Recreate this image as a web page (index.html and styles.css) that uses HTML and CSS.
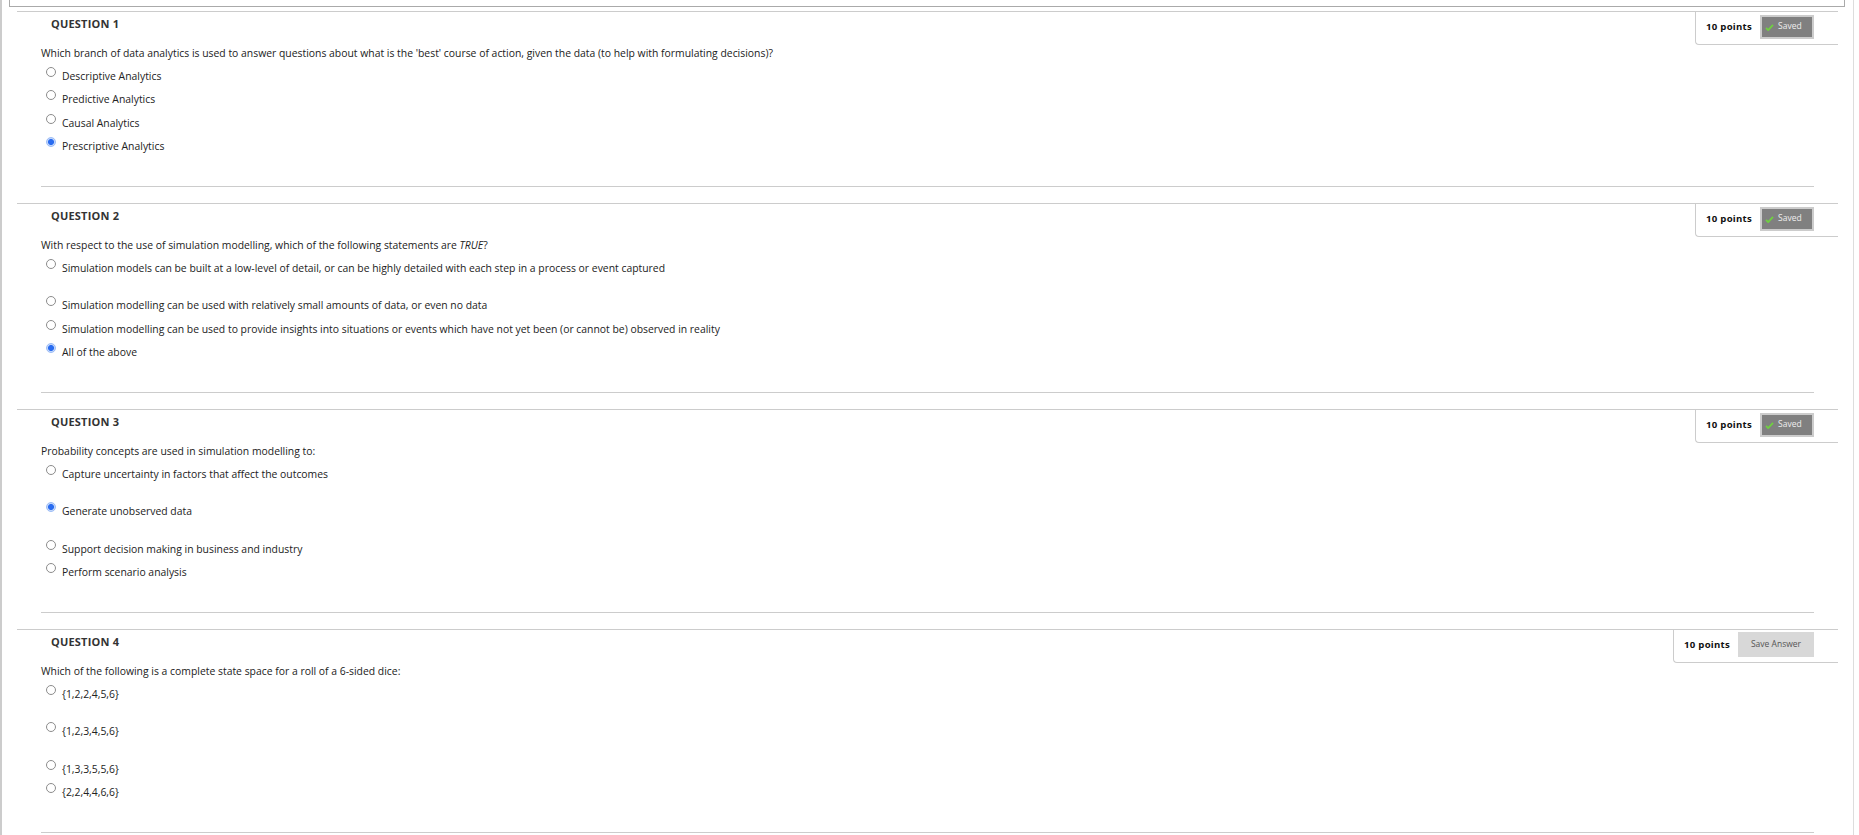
FILE: index.html
```html
<!DOCTYPE html>
<html lang="en">
<head>
<meta charset="utf-8">
<title>Test</title>
<link rel="stylesheet" href="styles.css">
</head>
<body>
<div class="page">
  <div class="topbox"></div>

  <section class="question q1">
    <header class="qhead">
      <h3 class="qtitle">QUESTION 1</h3>
      <div class="points"><span class="pts">10 points</span><span class="btn saved"><svg class="tick" viewBox="0 0 10 8"><path d="M1 4.5 L3.5 7 L9 1" fill="none" stroke="#6fd040" stroke-width="2"/></svg>Saved</span></div>
    </header>
    <div class="qbody">
      <p class="prompt">Which branch of data analytics is used to answer questions about what is the 'best' course of action, given the data (to help with formulating decisions)?</p>
      <label class="opt"><input type="radio" name="q1"><span>Descriptive Analytics</span></label>
      <label class="opt"><input type="radio" name="q1"><span>Predictive Analytics</span></label>
      <label class="opt"><input type="radio" name="q1"><span>Causal Analytics</span></label>
      <label class="opt"><input type="radio" name="q1" checked><span>Prescriptive Analytics</span></label>
    </div>
  </section>

  <section class="question q2">
    <header class="qhead">
      <h3 class="qtitle">QUESTION 2</h3>
      <div class="points"><span class="pts">10 points</span><span class="btn saved"><svg class="tick" viewBox="0 0 10 8"><path d="M1 4.5 L3.5 7 L9 1" fill="none" stroke="#6fd040" stroke-width="2"/></svg>Saved</span></div>
    </header>
    <div class="qbody">
      <p class="prompt">With respect to the use of simulation modelling, which of the following statements are <em>TRUE</em>?</p>
      <label class="opt tall"><input type="radio" name="q2"><span>Simulation models can be built at a low-level of detail, or can be highly detailed with each step in a process or event captured</span></label>
      <label class="opt"><input type="radio" name="q2"><span>Simulation modelling can be used with relatively small amounts of data, or even no data</span></label>
      <label class="opt"><input type="radio" name="q2"><span>Simulation modelling can be used to provide insights into situations or events which have not yet been (or cannot be) observed in reality</span></label>
      <label class="opt"><input type="radio" name="q2" checked><span>All of the above</span></label>
    </div>
  </section>

  <section class="question q3">
    <header class="qhead">
      <h3 class="qtitle">QUESTION 3</h3>
      <div class="points"><span class="pts">10 points</span><span class="btn saved"><svg class="tick" viewBox="0 0 10 8"><path d="M1 4.5 L3.5 7 L9 1" fill="none" stroke="#6fd040" stroke-width="2"/></svg>Saved</span></div>
    </header>
    <div class="qbody">
      <p class="prompt">Probability concepts are used in simulation modelling to:</p>
      <label class="opt tall"><input type="radio" name="q3"><span>Capture uncertainty in factors that affect the outcomes</span></label>
      <label class="opt tall"><input type="radio" name="q3" checked><span>Generate unobserved data</span></label>
      <label class="opt"><input type="radio" name="q3"><span>Support decision making in business and industry</span></label>
      <label class="opt"><input type="radio" name="q3"><span>Perform scenario analysis</span></label>
    </div>
  </section>

  <section class="question q4">
    <header class="qhead">
      <h3 class="qtitle">QUESTION 4</h3>
      <div class="points"><span class="pts">10 points</span><span class="btn unsaved">Save Answer</span></div>
    </header>
    <div class="qbody">
      <p class="prompt">Which of the following is a complete state space for a roll of a 6-sided dice:</p>
      <label class="opt tall"><input type="radio" name="q4"><span>{1,2,2,4,5,6}</span></label>
      <label class="opt tall"><input type="radio" name="q4"><span>{1,2,3,4,5,6}</span></label>
      <label class="opt"><input type="radio" name="q4"><span>{1,3,3,5,5,6}</span></label>
      <label class="opt"><input type="radio" name="q4"><span>{2,2,4,4,6,6}</span></label>
    </div>
  </section>
</div>
</body>
</html>
```

FILE: styles.css
```css
* { box-sizing: border-box; }
html, body { margin: 0; padding: 0; height: 835px; overflow: hidden; background: #fff; }
body { font-family: "Open Sans", "Noto Sans", sans-serif; color: #222; }

.page {
  width: 1854px;
  height: 835px;
  border-left: 2px solid #ccc;
  border-right: 1px solid #ddd;
  overflow: hidden;
}
.topbox {
  width: 1836px;
  height: 7px;
  margin-left: 7px;
  border: 1px solid #aaa;
  border-top: 0;
}
.question {
  width: 1821px;
  margin-left: 15px;
  margin-top: 4px;
  border-top: 1px solid #ccc;
}
.q2, .q3, .q4 { margin-top: 16px; }

.qhead {
  display: flex;
  justify-content: space-between;
  align-items: flex-start;
  height: 33px;
}
.qtitle {
  margin: 0;
  padding: 4px 0 0 34px;
  font-size: 11px;
  line-height: 15px;
  font-weight: 700;
  letter-spacing: 0.2px;
  color: #333;
}
.points {
  display: flex;
  align-items: flex-start;
  height: 33px;
  padding: 3px 24px 0 10px;
  border-left: 1px solid #ccc;
  border-bottom: 1px solid #ccc;
  border-bottom-left-radius: 4px;
}
.pts {
  font-size: 9.6px;
  line-height: 23px;
  font-weight: 700;
  color: #111;
  margin-right: 8px;
  letter-spacing: 0.25px;
}
.btn {
  display: flex;
  align-items: center;
  justify-content: center;
  height: 24px;
  font-size: 8.5px;
}
.saved {
  width: 54px;
  background: #808080;
  border: 2px solid #ccc;
  color: #eee;
  justify-content: flex-start;
  padding: 0 0 3px 3px;
}
.tick { width: 9px; height: 7px; margin: 4px 4px 0 0; }
.unsaved {
  width: 76px;
  height: 25px;
  margin-top: -1px;
  background: #d8d8d8;
  color: #555;
  padding-bottom: 2px;
}

.qbody {
  margin: 0 24px;
  border-bottom: 1px solid #ccc;
}
.prompt {
  margin: 0;
  padding-top: 1px;
  font-size: 10.4px;
  line-height: 14px;
  height: 22px;
  color: #222;
}
.prompt em { font-style: italic; }
.opt {
  display: flex;
  align-items: flex-start;
  height: 23.4px;
  font-size: 10.4px;
  line-height: 14px;
  color: #222;
}
.opt.tall { height: 37.4px; }
.opt span { padding-top: 2px; }
.opt input {
  appearance: none;
  -webkit-appearance: none;
  width: 10px;
  height: 10px;
  margin: 0 6px 0 5px;
  flex: none;
  border: 1px solid #8c8c8c;
  border-radius: 50%;
  background: #fff;
}
.opt input:checked {
  border: 1px solid #9dbdf6;
  background: radial-gradient(circle, #2a6cf0 0 2.6px, #c4d8fb 3.4px);
}
.q1 .qbody { height: 142px; }
.q2 .qbody { height: 156px; }
.q3 .qbody { height: 170px; }
.q4 .qbody { height: 170px; }
```
